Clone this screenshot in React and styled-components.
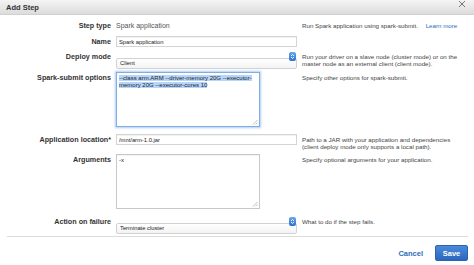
import React from "react";
import styled, { createGlobalStyle } from "styled-components";

const GlobalStyle = createGlobalStyle`
  html, body {
    margin: 0;
    padding: 0;
    background: #fff;
  }
  body {
    font-family: "Liberation Sans", Arial, sans-serif;
  }
`;

function Grip() {
  return (
    <GripMark width="6" height="6" viewBox="0 0 6 6">
      <line x1="1" y1="5.5" x2="5.5" y2="1" stroke="#999" strokeWidth="0.6" />
      <line x1="3.5" y1="5.5" x2="5.5" y2="3.5" stroke="#999" strokeWidth="0.6" />
    </GripMark>
  );
}

function Arrows() {
  return (
    <ArrowBox>
      <svg width="5" height="7" viewBox="0 0 5 7">
        <polyline points="1,3 2.5,1.5 4,3" fill="none" stroke="#fff" strokeWidth="0.9" />
        <polyline points="1,4 2.5,5.5 4,4" fill="none" stroke="#fff" strokeWidth="0.9" />
      </svg>
    </ArrowBox>
  );
}

function App() {
  return (
    <Dialog>
      <GlobalStyle />
      <Header>
        <Title>Add Step</Title>
        <Close width="8" height="8" viewBox="0 0 8 8">
          <line x1="1" y1="1" x2="7" y2="7" stroke="#666" strokeWidth="0.9" />
          <line x1="7" y1="1" x2="1" y2="7" stroke="#666" strokeWidth="0.9" />
        </Close>
      </Header>

      <Form>
        <Row $top={5}>
          <Label>Step type</Label>
          <Value>Spark application</Value>
          <Help>
            Run Spark application using spark-submit. <HelpLink>Learn more</HelpLink>
          </Help>
        </Row>

        <Row $top={5}>
          <Label>Name</Label>
          <TextInput defaultValue="Spark application" />
          <Help />
        </Row>

        <Row $top={4}>
          <Label>Deploy mode</Label>
          <SelectWrap>
            <Select defaultValue="Client">
              <option>Client</option>
              <option>Cluster</option>
            </Select>
            <Arrows />
          </SelectWrap>
          <Help>
            Run your driver on a slave node (cluster mode) or on the
            <br />
            master node as an external client (client mode).
          </Help>
        </Row>

        <Row $top={5}>
          <Label $tall>Spark-submit options</Label>
          <AreaBox $focused>
            <Selected>
              --class arm.ARM --driver-memory 20G --executor-
              <br />
              memory 20G --executor-cores 10
            </Selected>
            <Grip />
          </AreaBox>
          <Help>Specify other options for spark-submit.</Help>
        </Row>

        <Row $top={7}>
          <Label>Application location*</Label>
          <TextInput defaultValue="/mnt/arm-1.0.jar" />
          <Help>
            Path to a JAR with your application and dependencies
            <br />
            (client deploy mode only supports a local path).
          </Help>
        </Row>

        <Row $top={4}>
          <Label $tall>Arguments</Label>
          <AreaBox>
            <Area defaultValue="-x" />
            <Grip />
          </AreaBox>
          <Help>Specify optional arguments for your application.</Help>
        </Row>

        <Row $top={7}>
          <Label>Action on failure</Label>
          <SelectWrap>
            <Select defaultValue="Terminate cluster">
              <option>Terminate cluster</option>
              <option>Continue</option>
            </Select>
            <Arrows />
          </SelectWrap>
          <Help>What to do if the step fails.</Help>
        </Row>
      </Form>

      <Divider />

      <Footer>
        <CancelLink>Cancel</CancelLink>
        <SaveButton>Save</SaveButton>
      </Footer>
    </Dialog>
  );
}

const Dialog = styled.div`
  width: 474px;
  height: 265px;
  background: #fff;
  overflow: hidden;
`;

const Header = styled.div`
  height: 15px;
  display: flex;
  align-items: center;
  justify-content: space-between;
  padding: 0 8px 0 6px;
  background: linear-gradient(#f4f4f4, #dcdcdc);
  border-bottom: 1px solid #d0d0d0;
  box-sizing: border-box;
`;

const Title = styled.div`
  font-size: 7.5px;
  font-weight: bold;
  color: #333;
`;

const Close = styled.svg`
  display: block;
  margin-top: -6px;
`;

const Form = styled.div`
  display: flex;
  flex-direction: column;
`;

const Row = styled.div`
  display: grid;
  grid-template-columns: 111px 181px 1fr;
  column-gap: 5px;
  align-items: start;
  margin-top: ${(p) => p.$top}px;
`;

const Label = styled.div`
  text-align: right;
  font-size: 7.2px;
  font-weight: bold;
  color: #333;
  line-height: ${(p) => (p.$tall ? "9px" : "11px")};
  padding-top: ${(p) => (p.$tall ? "0.5px" : "0")};
  white-space: nowrap;
`;

const Value = styled.div`
  font-size: 7px;
  color: #555;
  line-height: 11px;
`;

const Help = styled.div`
  font-size: 6.2px;
  color: #444;
  line-height: 7.3px;
  padding-top: 1.5px;
  white-space: nowrap;
`;

const HelpLink = styled.span`
  color: #2a6ebb;
  margin-left: 6px;
`;

const TextInput = styled.input`
  box-sizing: border-box;
  width: 181px;
  height: 11px;
  margin: 0;
  padding: 0 2px;
  border: 1px solid #d4d4d4;
  box-shadow: inset 0 1px 1px rgba(0, 0, 0, 0.06);
  font-family: "Liberation Sans", Arial, sans-serif;
  font-size: 5.8px;
  color: #222;
  outline: none;
`;

const SelectWrap = styled.div`
  position: relative;
  width: 181px;
  height: 11px;
`;

const Select = styled.select`
  appearance: none;
  box-sizing: border-box;
  width: 100%;
  height: 100%;
  margin: 0;
  padding: 0 0 0 3px;
  border: 1px solid #d2d2d2;
  border-radius: 2px;
  background: linear-gradient(#ffffff, #f3f3f3);
  font-family: "Liberation Sans", Arial, sans-serif;
  font-size: 5.8px;
  color: #222;
  outline: none;
`;

const ArrowBox = styled.div`
  position: absolute;
  right: 1px;
  top: 1px;
  width: 7px;
  height: 9px;
  border-radius: 2px;
  background: linear-gradient(#6aa8ea, #2c72d0);
  display: flex;
  align-items: center;
  justify-content: center;
`;

const AreaBox = styled.div`
  position: relative;
  box-sizing: border-box;
  width: 144px;
  height: 55px;
  border: 1px solid ${(p) => (p.$focused ? "#7eaee3" : "#c8c8c8")};
  box-shadow: ${(p) =>
    p.$focused ? "0 0 2px 1px rgba(110, 160, 225, 0.55)" : "inset 0 1px 1px rgba(0,0,0,0.05)"};
  background: #fff;
  padding: 2px 2px;
  font-size: 6px;
  line-height: 7px;
  color: #222;
`;

const Selected = styled.span`
  background: #b6d5fb;
`;

const Area = styled.textarea`
  display: block;
  box-sizing: border-box;
  width: 100%;
  height: 100%;
  margin: 0;
  padding: 0;
  border: none;
  resize: none;
  outline: none;
  background: transparent;
  font-family: "Liberation Sans", Arial, sans-serif;
  font-size: 6px;
  line-height: 7px;
  color: #222;
`;

const GripMark = styled.svg`
  position: absolute;
  right: 1px;
  bottom: 1px;
  display: block;
`;

const Divider = styled.div`
  margin: 9px 6px 0 7px;
  height: 1px;
  background: #dcdcdc;
`;

const Footer = styled.div`
  display: flex;
  justify-content: flex-end;
  align-items: center;
  gap: 12px;
  margin-top: 8px;
  padding-right: 6px;
`;

const CancelLink = styled.span`
  font-size: 7.5px;
  font-weight: bold;
  color: #2a6ebb;
`;

const SaveButton = styled.button`
  width: 33px;
  height: 16px;
  padding: 0;
  border: 1px solid #2a62b0;
  border-radius: 2px;
  background: linear-gradient(#4a8ada, #2b67bd);
  color: #fff;
  font-family: "Liberation Sans", Arial, sans-serif;
  font-size: 7.5px;
  font-weight: bold;
`;

export default App;
